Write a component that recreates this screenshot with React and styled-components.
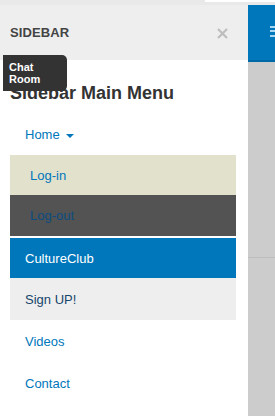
import React from "react";
import styled, { createGlobalStyle } from "styled-components";

const Global = createGlobalStyle`
  html, body { margin: 0; padding: 0; background: #fff; }
  body { font-family: "Liberation Sans", Arial, sans-serif; }
  * { box-sizing: border-box; }
`;

const Page = styled.div`
  width: 275px;
  height: 416px;
  overflow: hidden;
  display: flex;
  flex-direction: column;
  background: #e9e9e9;
`;

const TopStrip = styled.div`
  height: 5px;
  display: flex;
  flex-shrink: 0;
`;

const StripLeft = styled.div`
  width: 205px;
  background: #e9e9e9;
`;

const StripRight = styled.div`
  flex: 1;
  background: #e9e9e9;
  border-top: 2px solid #fff;
`;

const Row = styled.div`
  flex: 1;
  display: flex;
`;

const Sidebar = styled.aside`
  width: 248px;
  flex-shrink: 0;
  background: #fff;
  position: relative;
  display: flex;
  flex-direction: column;
`;

const Header = styled.div`
  height: 55px;
  background: #eeeeee;
  display: flex;
  align-items: center;
  justify-content: space-between;
  padding: 0 20px 0 10px;
`;

const HeaderTitle = styled.div`
  font-size: 13px;
  font-weight: bold;
  color: #444;
  letter-spacing: 0.1px;
`;

const CloseBtn = styled.svg`
  width: 11px;
  height: 11px;
  margin-top: 1px;
`;

const Tooltip = styled.div`
  position: absolute;
  left: 3px;
  top: 50px;
  width: 64px;
  height: 36px;
  background: #333;
  border-radius: 0 5px 5px 0;
  color: #fff;
  font-size: 11px;
  font-weight: bold;
  line-height: 12px;
  padding: 6px 0 0 6px;
  z-index: 2;
`;

const Body = styled.div`
  padding: 22px 12px 0 10px;
`;

const MenuTitle = styled.h2`
  margin: 0 0 10px 0;
  font-size: 18px;
  font-weight: bold;
  color: #333;
  line-height: 22px;
`;

const Menu = styled.ul`
  list-style: none;
  margin: 0;
  padding: 0;
`;

const Item = styled.li`
  height: ${(p) => p.$h || 41}px;
  display: flex;
  align-items: center;
  padding-left: ${(p) => p.$indent || 15}px;
  background: ${(p) => p.$bg || "transparent"};
  color: ${(p) => p.$color || "#0077bb"};
  font-size: 13px;
  margin-top: ${(p) => p.$mt || 0}px;
`;

const Caret = styled.span`
  display: inline-block;
  width: 0;
  height: 0;
  margin-left: 6px;
  margin-top: 2px;
  border-left: 4px solid transparent;
  border-right: 4px solid transparent;
  border-top: 4px solid #0077bb;
`;

const Main = styled.div`
  flex: 1;
  display: flex;
  flex-direction: column;
  background: #cccccc;
`;

const MainBar = styled.div`
  height: 57px;
  background: #0077bb;
  border-bottom: 2px solid #0068a6;
  display: flex;
  flex-direction: column;
  justify-content: center;
  gap: 2.5px;
  padding-left: 22px;
  padding-bottom: 3px;
`;

const Burger = styled.span`
  display: block;
  height: 2px;
  width: 12px;
  background: #a6d6f0;
`;

const MainBody = styled.div`
  height: 196px;
  border-bottom: 1px solid #bdbdbd;
`;

export default function App() {
  return (
    <>
      <Global />
      <Page>
        <TopStrip>
          <StripLeft />
          <StripRight />
        </TopStrip>
        <Row>
          <Sidebar>
            <Header>
              <HeaderTitle>SIDEBAR</HeaderTitle>
              <CloseBtn viewBox="0 0 11 11">
                <path d="M1 1 L10 10 M10 1 L1 10" stroke="#bdbdbd" strokeWidth="2.2" />
              </CloseBtn>
            </Header>
            <Tooltip>
              Chat
              <br />
              Room
            </Tooltip>
            <Body>
              <MenuTitle>Sidebar Main Menu</MenuTitle>
              <Menu>
                <Item>
                  Home
                  <Caret />
                </Item>
                <Item $indent={20} $bg="#e2e1cc" $h={40}>
                  Log-in
                </Item>
                <Item $indent={20} $bg="#535353" $color="#0c4c80">
                  Log-out
                </Item>
                <Item $bg="#0077bb" $color="#fff" $mt={2} $h={40}>
                  CultureClub
                </Item>
                <Item $bg="#eeeeee" $color="#16466b" $h={42}>
                  Sign UP!
                </Item>
                <Item $h={42}>Videos</Item>
                <Item $h={42}>Contact</Item>
              </Menu>
            </Body>
          </Sidebar>
          <Main>
            <MainBar>
              <Burger />
              <Burger />
              <Burger />
            </MainBar>
            <MainBody />
          </Main>
        </Row>
      </Page>
    </>
  );
}
